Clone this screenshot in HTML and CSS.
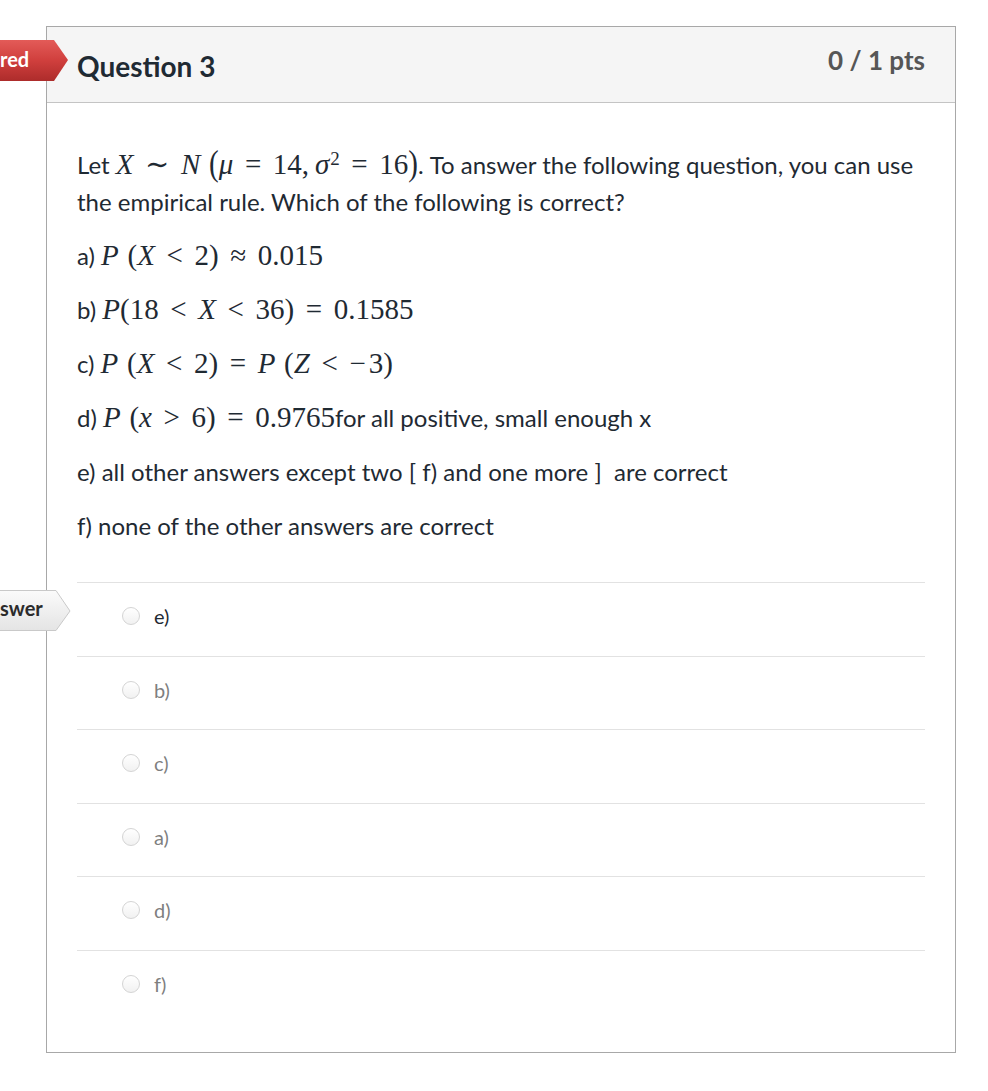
FILE: index.html
```html
<!DOCTYPE html>
<html>
<head>
<meta charset="utf-8">
<link rel="stylesheet" href="styles.css">
</head>
<body>
<div class="page">
  <div class="flag flag-red">
    <svg class="flag-bg" width="70" height="42" viewBox="0 0 70 42"><defs><linearGradient id="gr" x1="0" y1="0" x2="0" y2="1"><stop offset="0" stop-color="#e35b58"/><stop offset="0.5" stop-color="#d03f3d"/><stop offset="1" stop-color="#ad2c2b"/></linearGradient></defs><polygon points="0,0 54,0 68,20 54,41 0,41" fill="url(#gr)"/></svg>
    <span class="flag-text">red</span>
  </div>
  <div class="flag flag-grey">
    <svg class="flag-bg" width="72" height="42" viewBox="0 0 72 42"><defs><linearGradient id="gg" x1="0" y1="0" x2="0" y2="1"><stop offset="0" stop-color="#fbfbfb"/><stop offset="1" stop-color="#e4e4e4"/></linearGradient></defs><polygon points="-1,0.5 56,0.5 70,21 56,40.5 -1,40.5" fill="url(#gg)" stroke="#c9c9c9" stroke-width="1"/></svg>
    <span class="flag-text">swer</span>
  </div>

  <div class="card">
    <div class="card-header">
      <h2 class="title">Question 3</h2>
      <div class="pts">0 / 1 pts</div>
    </div>
    <div class="card-body">
      <div class="qtext">
        <p>Let <span class="m"><i>X</i><span class="rel">∼</span><i>N</i><span class="sp"></span><span class="bigp">(</span><i>μ</i><span class="rel">=</span>14,<span class="thin"></span><i>σ</i><sup>2</sup><span class="rel">=</span>16<span class="bigp">)</span></span><span>. To answer the following question, you can use</span> <span>the empirical rule. Which of the following is correct?</span></p>
        <p>a) <span class="m"><i>P</i><span class="sp"></span>(<i>X</i><span class="rel">&lt;</span>2)<span class="rel">≈</span>0.015</span></p>
        <p>b) <span class="m"><i>P</i>(18<span class="rel">&lt;</span><i>X</i><span class="rel">&lt;</span>36)<span class="rel">=</span>0.1585</span></p>
        <p>c) <span class="m"><i>P</i><span class="sp"></span>(<i>X</i><span class="rel">&lt;</span>2)<span class="rel">=</span><i>P</i><span class="sp"></span>(<i>Z</i><span class="rel">&lt;</span><span class="minus">−</span>3)</span></p>
        <p>d) <span class="m"><i>P</i><span class="sp"></span>(<i>x</i><span class="rel">&gt;</span>6)<span class="rel">=</span>0.9765</span>for all positive, small enough x</p>
        <p>e) all other answers except two [ f) and one more ]&nbsp; are correct</p>
        <p>f) none of the other answers are correct</p>
      </div>
      <div class="answers">
        <div class="answer selected"><span class="radio"></span><span class="lbl">e)</span></div>
        <div class="answer"><span class="radio"></span><span class="lbl">b)</span></div>
        <div class="answer"><span class="radio"></span><span class="lbl">c)</span></div>
        <div class="answer"><span class="radio"></span><span class="lbl">a)</span></div>
        <div class="answer"><span class="radio"></span><span class="lbl">d)</span></div>
        <div class="answer"><span class="radio"></span><span class="lbl">f)</span></div>
      </div>
    </div>
  </div>
</div>
</body>
</html>
```

FILE: styles.css
```css
html, body {
  margin: 0;
  padding: 0;
  background: #ffffff;
}

.page {
  position: relative;
  padding-top: 26px;
  font-family: Lato, "Noto Sans", sans-serif;
  color: #2d3b45;
}

.card {
  margin-left: 46px;
  width: 910px;
  box-sizing: border-box;
  border: 1px solid #a8a8a8;
  background: #fff;
}

.card-header {
  height: 76px;
  box-sizing: border-box;
  background: #f5f5f5;
  border-bottom: 1px solid #c4c4c4;
  display: flex;
  justify-content: space-between;
  align-items: center;
  padding: 0 30px;
}

.title {
  margin: 0;
  font-size: 28px;
  font-weight: 700;
  color: #1f2a33;
  padding-top: 2px;
}

.pts {
  font-size: 26px;
  font-weight: 700;
  color: #565656;
  padding-bottom: 10px;
}

.card-body {
  padding: 43px 30px 29px 30px;
}

.qtext {
  font-size: 24px;
  color: #1f2a33;
}

.qtext p {
  margin: 0 0 17px 0;
  line-height: 37px;
}

.qtext p:last-child {
  margin-bottom: 0;
}

.m {
  font-family: "Liberation Serif", "DejaVu Serif", serif;
  font-size: 29px;
  line-height: 1;
  white-space: nowrap;
}

.m i {
  font-style: italic;
}

.m sup {
  font-size: 19px;
  line-height: 0;
  vertical-align: 0.5em;
  margin-left: 1px;
}

.rel {
  margin: 0 0.4em;
}

.minus {
  margin-right: 0.1em;
}

.sp {
  display: inline-block;
  width: 0.3em;
}

.thin {
  display: inline-block;
  width: 0.2em;
}

.bigp {
  display: inline-block;
  transform: scale(1, 1.2);
  transform-origin: 50% 62%;
}

.answers {
  margin-top: 38px;
}

.answer {
  height: 73.5px;
  box-sizing: border-box;
  border-top: 1px solid #e2e2e2;
  display: flex;
  align-items: center;
  padding-left: 45px;
  padding-bottom: 6px;
}

.radio {
  width: 18px;
  height: 18px;
  border-radius: 50%;
  box-sizing: border-box;
  border: 1px solid #d4d4d4;
  background: linear-gradient(#ffffff, #f1f1f1);
  flex: none;
}

.lbl {
  margin-left: 14px;
  font-size: 20px;
  color: #7f7f7f;
}

.answer.selected .lbl {
  color: #1f2a33;
}

.flag {
  position: absolute;
  left: 0;
  z-index: 2;
  font-family: Lato, "Noto Sans", sans-serif;
  font-weight: 700;
}

.flag-bg {
  position: absolute;
  left: 0;
  top: 0;
  display: block;
}

.flag-text {
  position: relative;
  display: block;
}

.flag-red {
  top: 40px;
  width: 70px;
  height: 42px;
}

.flag-red .flag-text {
  color: #ffffff;
  font-size: 20px;
  line-height: 24px;
  padding-top: 7px;
}

.flag-grey {
  top: 590px;
  width: 72px;
  height: 42px;
}

.flag-grey .flag-text {
  color: #2b2b2b;
  font-size: 20px;
  line-height: 24px;
  padding-top: 6px;
}
```
